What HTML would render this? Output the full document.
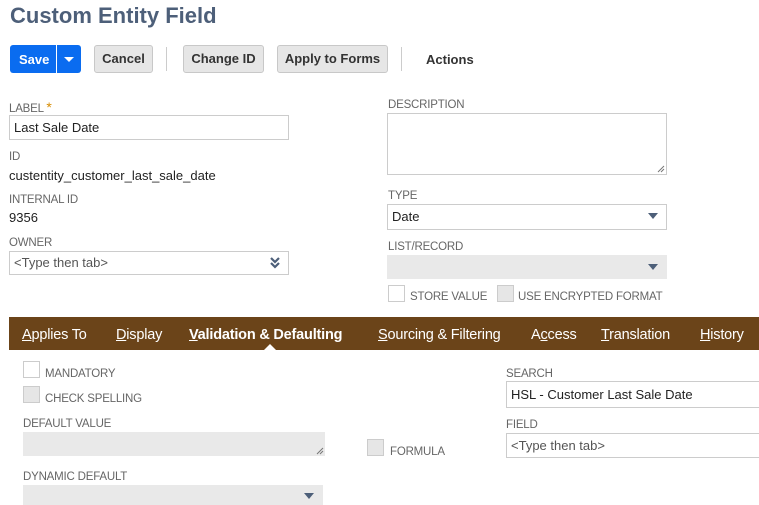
<!DOCTYPE html>
<html><head><style>
*{box-sizing:border-box;margin:0;padding:0}
body{width:759px;height:497px;overflow:hidden;background:#fff;font-family:"Liberation Sans",sans-serif;color:#222;position:relative}
.a{position:absolute;white-space:nowrap}
.lbl{font-size:11.5px;color:#666;text-transform:uppercase;letter-spacing:-0.2px}
.val{font-size:13px;color:#222}
.btn{position:absolute;top:45px;height:28px;border:1px solid #c8c8c8;border-radius:3px;background:#e6e6e6;font-size:13px;font-weight:bold;color:#333;text-align:center;line-height:26px}
.inp{position:absolute;border:1px solid #ccc;background:#fff;font-size:13px;padding-left:4px}
.gray{background:#e9e9e9;border-color:#e9e9e9}
.cb{position:absolute;width:17px;height:17px;border:1px solid #ccc;background:#fff}
.cbg{background:#e6e6e6}
.tab{position:absolute;top:327px;color:#fff;font-size:14.5px;letter-spacing:-0.2px}
.tab u{text-decoration:underline}
.tri{position:absolute;border-left:5px solid transparent;border-right:5px solid transparent;border-top:6px solid #4d5f79}
</style></head><body>
<div class="a" style="left:10px;top:3px;font-size:22px;font-weight:bold;color:#4d5f79">Custom Entity Field</div>

<div class="a" style="left:10px;top:45px;width:71px;height:28px;background:#0a6cf0;border-radius:3px"></div>
<div class="a" style="left:19px;top:52px;color:#fff;font-weight:bold;font-size:13px">Save</div>
<div class="a" style="left:56px;top:45px;width:1px;height:28px;background:#fff"></div>
<div class="a" style="left:64px;top:57px;border-left:5px solid transparent;border-right:5px solid transparent;border-top:5px solid #fff"></div>
<div class="btn" style="left:94px;width:59px">Cancel</div>
<div class="a" style="left:166px;top:47px;width:1px;height:24px;background:#ccc"></div>
<div class="btn" style="left:183px;width:81px">Change ID</div>
<div class="btn" style="left:277px;width:111px">Apply to Forms</div>
<div class="a" style="left:401px;top:47px;width:1px;height:24px;background:#ccc"></div>
<div class="a" style="left:426px;top:52px;font-size:13px;font-weight:bold;color:#333">Actions</div>

<div class="a lbl" style="left:9px;top:99px">Label <span style="color:#d68b00;font-size:14px">*</span></div>
<div class="inp" style="left:9px;top:115px;width:280px;height:25px;line-height:23px">Last Sale Date</div>
<div class="a lbl" style="left:9px;top:151px">ID</div>
<div class="a val" style="left:9px;top:168px">custentity_customer_last_sale_date</div>
<div class="a lbl" style="left:9px;top:194px">Internal ID</div>
<div class="a val" style="left:9px;top:210px">9356</div>
<div class="a lbl" style="left:9px;top:237px">Owner</div>
<div class="inp" style="left:9px;top:251px;width:280px;height:24px;line-height:22px;color:#555">&lt;Type then tab&gt;</div>
<svg class="a" style="left:269px;top:257px" width="12" height="12" viewBox="0 0 12 12"><path d="M2 1l4 4 4-4M2 6l4 4 4-4" stroke="#4d5f79" stroke-width="2.2" fill="none"/></svg>

<div class="a lbl" style="left:388px;top:99px">Description</div>
<div class="inp" style="left:387px;top:113px;width:280px;height:62px"></div>
<svg class="a" style="left:657px;top:165px" width="8" height="8"><path d="M1 7L7 1M4 7L7 4" stroke="#777" stroke-width="1"/></svg>
<div class="a lbl" style="left:388px;top:190px">Type</div>
<div class="inp" style="left:387px;top:204px;width:280px;height:26px;line-height:24px">Date</div>
<div class="tri" style="left:648px;top:213px"></div>
<div class="a lbl" style="left:388px;top:241px">List/Record</div>
<div class="inp gray" style="left:387px;top:255px;width:280px;height:24px"></div>
<div class="tri" style="left:648px;top:264px"></div>
<div class="cb" style="left:388px;top:285px"></div>
<div class="a lbl" style="left:410px;top:291px">Store Value</div>
<div class="cb cbg" style="left:497px;top:285px"></div>
<div class="a lbl" style="left:518px;top:291px">Use Encrypted Format</div>

<div class="a" style="left:9px;top:317px;width:750px;height:33px;background:#6b4419"></div>
<div class="tab" style="left:22px"><u>A</u>pplies To</div>
<div class="tab" style="left:116px"><u>D</u>isplay</div>
<div class="tab" style="left:189px;font-weight:bold"><u>V</u>alidation &amp; Defaulting</div>
<div class="tab" style="left:378px"><u>S</u>ourcing &amp; Filtering</div>
<div class="tab" style="left:531px">A<u>c</u>cess</div>
<div class="tab" style="left:601px"><u>T</u>ranslation</div>
<div class="tab" style="left:700px"><u>H</u>istory</div>
<div class="a" style="left:264px;top:344px;border-left:6px solid transparent;border-right:6px solid transparent;border-bottom:6px solid #fff"></div>

<div class="cb" style="left:23px;top:361px"></div>
<div class="a lbl" style="left:45px;top:368px">Mandatory</div>
<div class="cb cbg" style="left:23px;top:386px"></div>
<div class="a lbl" style="left:45px;top:393px">Check Spelling</div>
<div class="a lbl" style="left:23px;top:418px">Default Value</div>
<div class="inp gray" style="left:23px;top:432px;width:302px;height:24px"></div>
<svg class="a" style="left:316px;top:447px" width="8" height="8"><path d="M1 7L7 1M4 7L7 4" stroke="#777" stroke-width="1"/></svg>
<div class="cb cbg" style="left:367px;top:439px"></div>
<div class="a lbl" style="left:390px;top:446px">Formula</div>
<div class="a lbl" style="left:23px;top:471px">Dynamic Default</div>
<div class="inp gray" style="left:23px;top:485px;width:300px;height:20px"></div>
<div class="tri" style="left:304px;top:493px"></div>

<div class="a lbl" style="left:506px;top:368px">Search</div>
<div class="inp" style="left:506px;top:381px;width:260px;height:27px;line-height:25px">HSL - Customer Last Sale Date</div>
<div class="a lbl" style="left:506px;top:419px">Field</div>
<div class="inp" style="left:506px;top:433px;width:260px;height:25px;line-height:23px;color:#555">&lt;Type then tab&gt;</div>
</body></html>
